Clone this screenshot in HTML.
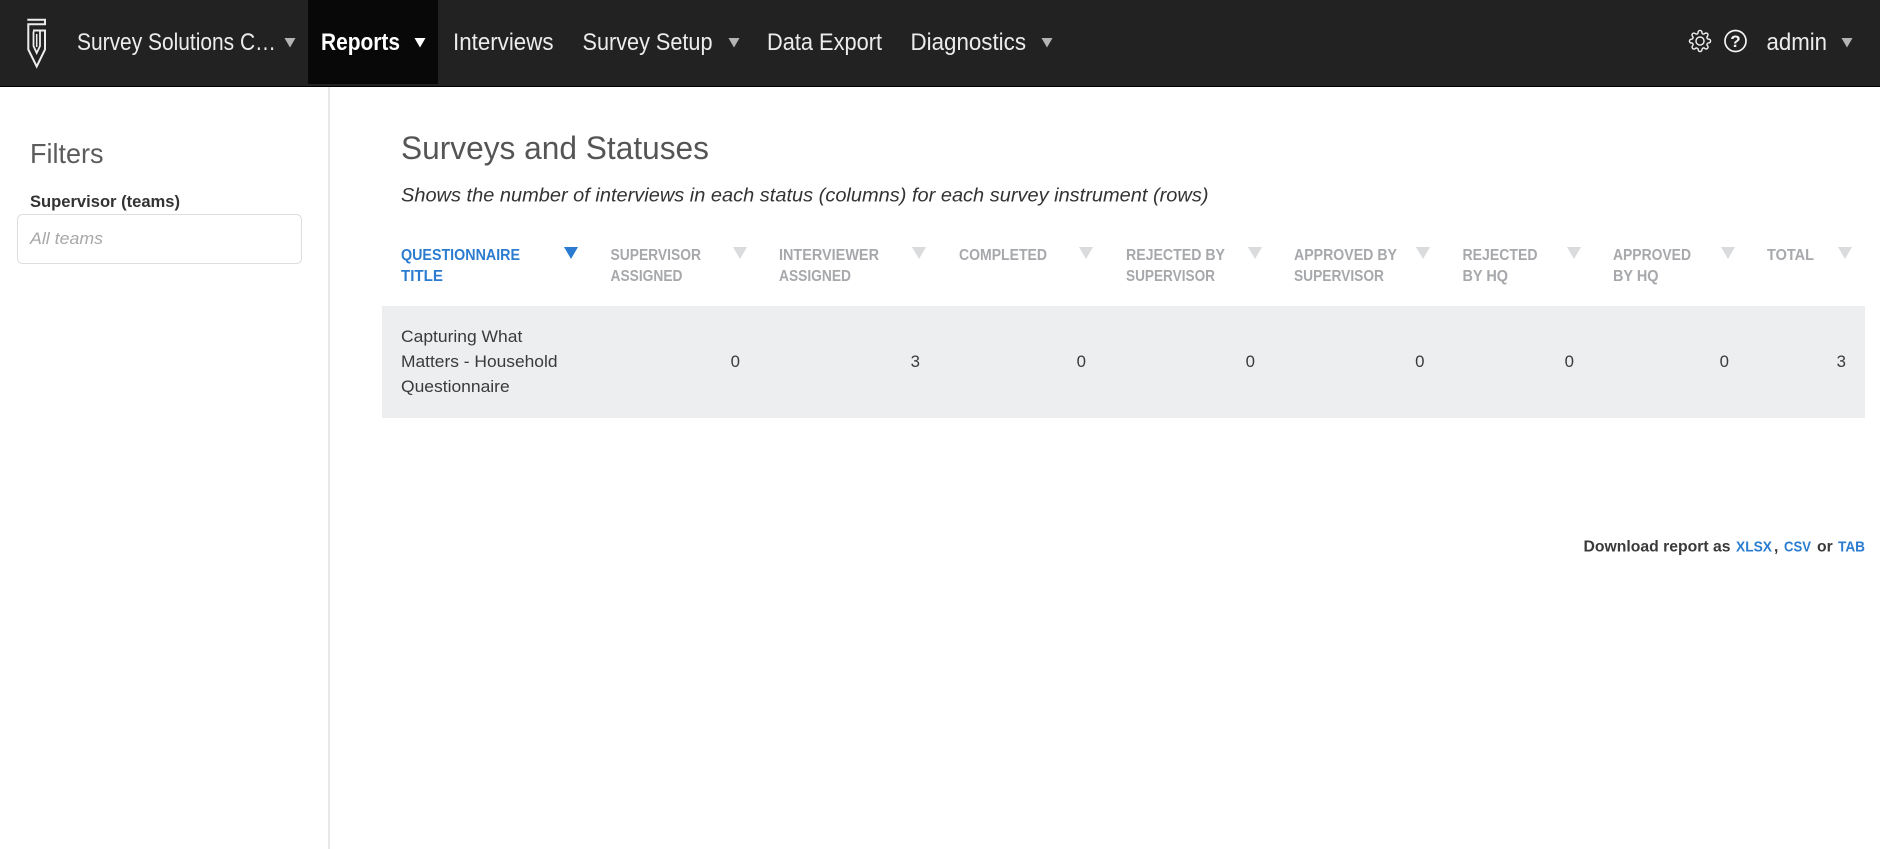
<!DOCTYPE html>
<html lang="en">
<head>
<meta charset="utf-8">
<title>Surveys and Statuses</title>
<style>
html,body{margin:0;padding:0;background:#fff;width:1880px;height:849px;overflow:hidden}
svg{position:absolute;left:0;top:0;display:block}
text{font-family:"Liberation Sans",Arial,sans-serif}
.nav{font-size:24px;fill:#ececec}
.th{font-size:15.5px;font-weight:700;fill:#a6a8ab}
.tb{font-size:16.8px;fill:#3a3a3a}
.dl{font-size:15.5px;font-weight:700;fill:#3a3a3a}
.ln{font-size:15px;fill:#2b7cd0}
</style>
</head>
<body>
<svg width="1880" height="849" viewBox="0 0 1880 849" xmlns="http://www.w3.org/2000/svg">
  <!-- top bar -->
  <rect x="0" y="0" width="1880" height="86" fill="#222222"/>
  <rect x="0" y="86" width="1880" height="1" fill="#000"/>
  <rect x="308" y="0" width="130" height="84" fill="#080808"/>

  <!-- logo -->
  <g fill="none" stroke="#ececec" stroke-width="2">
    <path d="M27.3 19.7H45V24.3H28.3V49.5L36.7 66.5L45 49.5V30.5H33"/>
    <path d="M33.5 31.5V46L36.7 53L40 46V31.5" stroke-width="1.8"/>
    <path d="M36.7 34V47" stroke-width="1.5"/>
  </g>

  <!-- nav -->
  <text class="nav" x="77" y="50" textLength="199" lengthAdjust="spacingAndGlyphs">Survey Solutions C…</text>
  <polygon points="284.5,38 295.5,38 290,47.5" fill="#b4b4b4"/>
  <text class="nav" x="321" y="50" textLength="79" lengthAdjust="spacingAndGlyphs" style="font-weight:700;fill:#fff">Reports</text>
  <polygon points="414.5,38 425.5,38 420,47.5" fill="#fff"/>
  <text class="nav" x="453" y="50" textLength="100.5" lengthAdjust="spacingAndGlyphs">Interviews</text>
  <text class="nav" x="582.5" y="50" textLength="130" lengthAdjust="spacingAndGlyphs">Survey Setup</text>
  <polygon points="728.5,38 739.5,38 734,47.5" fill="#b4b4b4"/>
  <text class="nav" x="767" y="50" textLength="115" lengthAdjust="spacingAndGlyphs">Data Export</text>
  <text class="nav" x="910.5" y="50" textLength="115.5" lengthAdjust="spacingAndGlyphs">Diagnostics</text>
  <polygon points="1041.5,38 1052.5,38 1047,47.5" fill="#b4b4b4"/>

  <!-- right icons -->
  <g transform="translate(1688.5 29.5) scale(.96)" fill="none" stroke="#f0f0f0" stroke-width="1.5">
    <circle cx="12" cy="12" r="4.2"/>
    <path d="M19.4 15a1.65 1.65 0 0 0 .33 1.82l.06.06a2 2 0 0 1 0 2.83 2 2 0 0 1-2.83 0l-.06-.06a1.65 1.65 0 0 0-1.82-.33 1.65 1.65 0 0 0-1 1.51V21a2 2 0 0 1-2 2 2 2 0 0 1-2-2v-.09A1.65 1.65 0 0 0 9 19.4a1.65 1.65 0 0 0-1.82.33l-.06.06a2 2 0 0 1-2.83 0 2 2 0 0 1 0-2.83l.06-.06a1.65 1.65 0 0 0 .33-1.82 1.65 1.65 0 0 0-1.51-1H3a2 2 0 0 1-2-2 2 2 0 0 1 2-2h.09A1.65 1.65 0 0 0 4.6 9a1.65 1.65 0 0 0-.33-1.82l-.06-.06a2 2 0 0 1 0-2.83 2 2 0 0 1 2.83 0l.06.06a1.65 1.65 0 0 0 1.82.33H9a1.65 1.65 0 0 0 1-1.51V3a2 2 0 0 1 2-2 2 2 0 0 1 2 2v.09a1.65 1.65 0 0 0 1 1.51 1.65 1.65 0 0 0 1.82-.33l.06-.06a2 2 0 0 1 2.83 0 2 2 0 0 1 0 2.83l-.06.06a1.65 1.65 0 0 0-.33 1.82V9a1.65 1.65 0 0 0 1.51 1H21a2 2 0 0 1 2 2 2 2 0 0 1-2 2h-.09a1.65 1.65 0 0 0-1.51 1z"/>
  </g>
  <circle cx="1735.5" cy="41" r="10.5" fill="none" stroke="#f4f4f4" stroke-width="1.7"/>
  <text x="1735.5" y="47" text-anchor="middle" style="font-size:17px;font-weight:700;fill:#f4f4f4">?</text>
  <text class="nav" x="1766.5" y="50" textLength="60.5" lengthAdjust="spacingAndGlyphs">admin</text>
  <polygon points="1841.5,38 1852.5,38 1847,47.5" fill="#b4b4b4"/>

  <!-- sidebar -->
  <rect x="328" y="87" width="2" height="762" fill="#e8e8e8"/>
  <text x="30" y="163" textLength="73.5" lengthAdjust="spacingAndGlyphs" style="font-size:28px;fill:#5c5c5c">Filters</text>
  <text x="30" y="207" textLength="150" lengthAdjust="spacingAndGlyphs" style="font-size:16.8px;font-weight:700;fill:#333">Supervisor (teams)</text>
  <rect x="17.5" y="214.5" width="284" height="49" rx="5" ry="5" fill="#fff" stroke="#dedede"/>
  <text x="30" y="244" textLength="73" lengthAdjust="spacingAndGlyphs" style="font-size:16.8px;font-style:italic;fill:#a8a8a8">All teams</text>

  <!-- title -->
  <text x="401" y="159" textLength="308" lengthAdjust="spacingAndGlyphs" style="font-size:32px;fill:#555">Surveys and Statuses</text>
  <text x="401" y="201.5" textLength="807.5" lengthAdjust="spacingAndGlyphs" style="font-size:19.5px;font-style:italic;fill:#333">Shows the number of interviews in each status (columns) for each survey instrument (rows)</text>

  <!-- table head -->
  <g>
    <text class="th" x="401" y="260" textLength="119" lengthAdjust="spacingAndGlyphs" style="fill:#2b7cd0">QUESTIONNAIRE</text>
    <text class="th" x="401" y="281" textLength="42" lengthAdjust="spacingAndGlyphs" style="fill:#2b7cd0">TITLE</text>
    <polygon points="564,247 578,247 571,259" fill="#2b7cd0"/>

    <text class="th" x="610.5" y="260" textLength="90.5" lengthAdjust="spacingAndGlyphs">SUPERVISOR</text>
    <text class="th" x="610.5" y="281" textLength="72" lengthAdjust="spacingAndGlyphs">ASSIGNED</text>
    <polygon points="733,247 747,247 740,259" fill="#d9dbdd"/>

    <text class="th" x="779" y="260" textLength="100" lengthAdjust="spacingAndGlyphs">INTERVIEWER</text>
    <text class="th" x="779" y="281" textLength="72" lengthAdjust="spacingAndGlyphs">ASSIGNED</text>
    <polygon points="912,247 926,247 919,259" fill="#d9dbdd"/>

    <text class="th" x="959" y="260" textLength="88" lengthAdjust="spacingAndGlyphs">COMPLETED</text>
    <polygon points="1079,247 1093,247 1086,259" fill="#d9dbdd"/>

    <text class="th" x="1126" y="260" textLength="99" lengthAdjust="spacingAndGlyphs">REJECTED BY</text>
    <text class="th" x="1126" y="281" textLength="89" lengthAdjust="spacingAndGlyphs">SUPERVISOR</text>
    <polygon points="1248,247 1262,247 1255,259" fill="#d9dbdd"/>

    <text class="th" x="1294" y="260" textLength="103" lengthAdjust="spacingAndGlyphs">APPROVED BY</text>
    <text class="th" x="1294" y="281" textLength="90" lengthAdjust="spacingAndGlyphs">SUPERVISOR</text>
    <polygon points="1416,247 1430,247 1423,259" fill="#d9dbdd"/>

    <text class="th" x="1462.5" y="260" textLength="75" lengthAdjust="spacingAndGlyphs">REJECTED</text>
    <text class="th" x="1462.5" y="281" textLength="45.5" lengthAdjust="spacingAndGlyphs">BY HQ</text>
    <polygon points="1567,247 1581,247 1574,259" fill="#d9dbdd"/>

    <text class="th" x="1613" y="260" textLength="78" lengthAdjust="spacingAndGlyphs">APPROVED</text>
    <text class="th" x="1613" y="281" textLength="45.5" lengthAdjust="spacingAndGlyphs">BY HQ</text>
    <polygon points="1721,247 1735,247 1728,259" fill="#d9dbdd"/>

    <text class="th" x="1767" y="260" textLength="47" lengthAdjust="spacingAndGlyphs">TOTAL</text>
    <polygon points="1838,247 1852,247 1845,259" fill="#d9dbdd"/>
  </g>

  <!-- row -->
  <rect x="382" y="306" width="1483" height="112" fill="#edeef0"/>
  <text class="tb" x="401" y="341.8" textLength="121.3" lengthAdjust="spacingAndGlyphs">Capturing What</text>
  <text class="tb" x="401" y="367" textLength="156.5" lengthAdjust="spacingAndGlyphs">Matters - Household</text>
  <text class="tb" x="401" y="392.2" textLength="108.7" lengthAdjust="spacingAndGlyphs">Questionnaire</text>
  <g text-anchor="end">
    <text class="tb" x="740" y="367">0</text>
    <text class="tb" x="920" y="367">3</text>
    <text class="tb" x="1086" y="367">0</text>
    <text class="tb" x="1255" y="367">0</text>
    <text class="tb" x="1424.5" y="367">0</text>
    <text class="tb" x="1574" y="367">0</text>
    <text class="tb" x="1729" y="367">0</text>
    <text class="tb" x="1846" y="367">3</text>
  </g>

  <!-- download -->
  <text class="dl" x="1583.5" y="551.5" textLength="147" lengthAdjust="spacingAndGlyphs">Download report as</text>
  <text class="dl ln" x="1736" y="551.5" textLength="36" lengthAdjust="spacingAndGlyphs">XLSX</text>
  <text class="dl" x="1774" y="551.5">,</text>
  <text class="dl ln" x="1784" y="551.5" textLength="27" lengthAdjust="spacingAndGlyphs">CSV</text>
  <text class="dl" x="1817" y="551.5" textLength="15.7" lengthAdjust="spacingAndGlyphs">or</text>
  <text class="dl ln" x="1838" y="551.5" textLength="27" lengthAdjust="spacingAndGlyphs">TAB</text>
</svg>
</body>
</html>
